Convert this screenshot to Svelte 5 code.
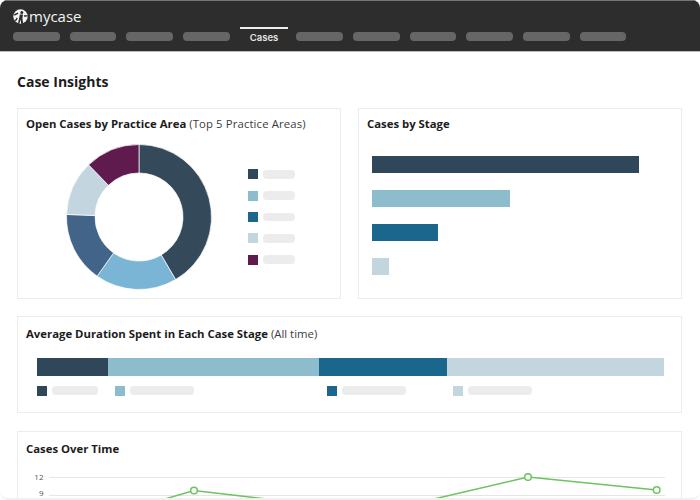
<script lang="ts">
    const navLeft = [0, 1, 2, 3];
    const navRight = [0, 1, 2, 3, 4, 5];

    // angles in degrees, clockwise from 12 o'clock
    const slices = [
        { from: 0, to: 149.7, color: '#34495a' },
        { from: 149.7, to: 215.3, color: '#7bb5d5' },
        { from: 215.3, to: 272, color: '#416488' },
        { from: 272, to: 316, color: '#c3d6e0' },
        { from: 316, to: 360, color: '#5f1b4d' }
    ];
    const legendColors = ['#304659', '#8dbdcc', '#1b668c', '#c3d6e0', '#5f1b4d'];

    const stageBars = [
        { width: 267, color: '#304659' },
        { width: 138, color: '#8dbdcc' },
        { width: 66, color: '#1b668c' },
        { width: 16.5, color: '#c3d6e0' }
    ];

    const durations = [
        { width: 71, item: 78, pill: 46, color: '#304659' },
        { width: 211, item: 212, pill: 64, color: '#8dbdcc' },
        { width: 128, item: 126, pill: 64, color: '#1b668c' },
        { width: 216.7, item: 100, pill: 64, color: '#c3d6e0' }
    ];

    function point(r: number, deg: number): string {
        const a = (deg * Math.PI) / 180;
        return `${(r * Math.sin(a)).toFixed(2)} ${(-r * Math.cos(a)).toFixed(2)}`;
    }

    function arc(from: number, to: number): string {
        const large = to - from > 180 ? 1 : 0;
        return `M${point(72.5, from)} A72.5 72.5 0 ${large} 1 ${point(72.5, to)} L${point(44, to)} A44 44 0 ${large} 0 ${point(44, from)} Z`;
    }
</script>

<div class="frame">
    <header>
        <div class="logo">
            <svg width="15" height="15" viewBox="0 0 15 15" aria-hidden="true">
                <circle cx="7.5" cy="7.5" r="7.2" fill="#f4f4f4" />
                <circle cx="8.8" cy="3.4" r="1.5" fill="#2d2d2d" />
                <path d="M6.8 5.6 L10 5.6 L9.4 9.4 L10.2 14.8 L8.2 14.8 L7.6 10.4 L6.4 14.6 L5 14.2 L6.2 9 Z" fill="#2d2d2d" />
                <path d="M1 5.2 L4.8 3.6 L5.4 4.8 L1.6 6.8 Z M3.8 8.6 L4.8 9.6 L2.8 12.4 L1.8 11.4 Z M11 6.2 L14.6 6.2 L14.6 7.6 L11 7.8 Z" fill="#2d2d2d" />
            </svg>
            <span>mycase</span>
        </div>
        <nav>
            {#each navLeft as n (n)}
                <span class="nav-pill"></span>
            {/each}
            <span class="nav-active">Cases</span>
            {#each navRight as n (n)}
                <span class="nav-pill"></span>
            {/each}
        </nav>
    </header>

    <main>
        <h1>Case Insights</h1>

        <div class="top-row">
            <section class="card">
                <h2>Open Cases by Practice Area <span class="wide">(Top 5 Practice Areas)</span></h2>
                <div class="donut-wrap">
                    <svg width="146" height="146" viewBox="-73 -73 146 146" aria-hidden="true">
                        {#each slices as s (s.color)}
                            <path d={arc(s.from, s.to)} fill={s.color} stroke="#fff" stroke-width="0.7" />
                        {/each}
                    </svg>
                    <ul class="donut-legend">
                        {#each legendColors as c (c)}
                            <li>
                                <i class="swatch" style:background={c}></i>
                                <b class="pill"></b>
                            </li>
                        {/each}
                    </ul>
                </div>
            </section>

            <section class="card">
                <h2>Cases by Stage</h2>
                <div class="bars">
                    {#each stageBars as bar (bar.color)}
                        <div class="bar" style:width="{bar.width}px" style:background={bar.color}></div>
                    {/each}
                </div>
            </section>
        </div>

        <section class="card duration">
            <h2>Average Duration Spent in Each Case Stage <span>(All time)</span></h2>
            <div class="stack">
                {#each durations as d (d.color)}
                    <div style:width="{d.width}px" style:background={d.color}></div>
                {/each}
            </div>
            <div class="stack-legend">
                {#each durations as d (d.color)}
                    <div class="stack-item" style:width="{d.item}px">
                        <i class="swatch" style:background={d.color}></i>
                        <b class="pill" style:width="{d.pill}px"></b>
                    </div>
                {/each}
            </div>
        </section>

        <section class="card over-time">
            <h2>Cases Over Time</h2>
            <svg class="line-chart" width="664" height="69" viewBox="17 431 664 69" aria-hidden="true">
                <line x1="49" y1="477.5" x2="665" y2="477.5" stroke="#e6e6e6" />
                <line x1="49" y1="495.5" x2="665" y2="495.5" stroke="#e6e6e6" />
                <text x="43.5" y="479.5" text-anchor="end">12</text>
                <text x="43.5" y="495.5" text-anchor="end">9</text>
                <polyline points="141,506 194,490.5 326,506" fill="none" stroke="#6cc45f" stroke-width="1.5" />
                <polyline points="404,506 528,477 656.7,490" fill="none" stroke="#6cc45f" stroke-width="1.5" />
                <circle cx="194" cy="490.5" r="3.3" fill="#fff" stroke="#6cc45f" stroke-width="1.5" />
                <circle cx="528" cy="477" r="3.3" fill="#fff" stroke="#6cc45f" stroke-width="1.5" />
                <circle cx="656.7" cy="490" r="3.3" fill="#fff" stroke="#6cc45f" stroke-width="1.5" />
            </svg>
        </section>
    </main>
</div>

<style>
    :global(body) {
        background-color: #fff;
    }

    .frame {
        box-sizing: border-box;
        height: 500px;
        overflow: hidden;
        background-color: #fff;
        border-radius: 8px;
        border-bottom: 2px solid #f0f0f0;
        font-family: "Open Sans", "Liberation Sans", sans-serif;
        color: #1c1c1c;
    }

    header {
        box-sizing: border-box;
        height: 52px;
        padding: 8px 13px 0;
        background-color: #2d2d2d;
        border-top: 1px solid #777;
        border-bottom: 1px solid #bbb;
    }

    .logo {
        display: flex;
        align-items: center;
        gap: 1px;
        height: 15px;
        color: #f4f4f4;
        font-size: 15px;
        font-weight: 500;
        line-height: 15px;
    }

    .logo span {
        margin-top: -1px;
    }

    nav {
        display: flex;
        gap: 10px;
        align-items: flex-start;
        height: 24px;
        margin-top: 3px;
    }

    .nav-pill {
        width: 46.7px;
        height: 8.5px;
        margin-top: 5px;
        background-color: #666;
        border-radius: 4px;
    }

    .nav-active {
        box-sizing: border-box;
        width: 48.6px;
        margin-right: -2px;
        border-top: 2px solid #eee;
        padding-top: 1.5px;
        text-align: center;
        color: #e4e4e4;
        font-family: Inter, "Liberation Sans", sans-serif;
        font-size: 9.5px;
        font-weight: 600;
        line-height: 14px;
    }

    main {
        padding: 0 18px 0 17px;
    }

    h1 {
        margin: 20px 0 17px;
        font-size: 14px;
        font-weight: 700;
        line-height: 19px;
    }

    h2 {
        margin: -1px 0 0;
        font-size: 11.35px;
        font-weight: 700;
        line-height: 15px;
    }

    h2 span {
        font-weight: 400;
        color: #3c3c3c;
    }

    h2 .wide {
        letter-spacing: 0.12px;
    }

    .top-row {
        display: grid;
        grid-template-columns: 324px 324px;
        gap: 17px;
        margin-bottom: 17px;
    }

    .card {
        box-sizing: border-box;
        padding: 8px;
        border: 1px solid #ececec;
    }

    .top-row .card {
        height: 191px;
    }

    .donut-wrap {
        display: flex;
        align-items: center;
        margin: 13px 0 0 40px;
    }

    .donut-legend {
        display: flex;
        flex-direction: column;
        gap: 11.3px;
        margin: 0 0 0 36px;
        padding: 0;
        list-style: none;
    }

    .donut-legend li {
        display: flex;
        align-items: center;
        gap: 5px;
    }

    .swatch {
        display: block;
        flex: none;
        width: 10px;
        height: 10px;
    }

    .pill {
        display: block;
        width: 32px;
        height: 8.5px;
        background-color: #ececec;
        border-radius: 4px;
    }

    .bars {
        display: flex;
        flex-direction: column;
        gap: 17px;
        margin: 25px 0 0 5px;
    }

    .bar {
        height: 17px;
    }

    .duration {
        height: 97px;
        margin-bottom: 18px;
    }

    .duration h2,
    .over-time h2 {
        margin-top: 1px;
    }

    .stack {
        display: flex;
        height: 17.5px;
        margin: 17px 0 0 11px;
    }

    .stack-legend {
        display: flex;
        margin: 10px 0 0 11px;
    }

    .stack-item {
        display: flex;
        align-items: center;
        gap: 5px;
        flex: none;
    }

    .over-time {
        position: relative;
        height: 90px;
    }

    .line-chart {
        position: absolute;
        left: -1px;
        top: -1px;
        overflow: hidden;
    }

    .line-chart text {
        font-family: "Open Sans", "Liberation Sans", sans-serif;
        font-size: 8px;
        fill: #555;
    }
</style>
